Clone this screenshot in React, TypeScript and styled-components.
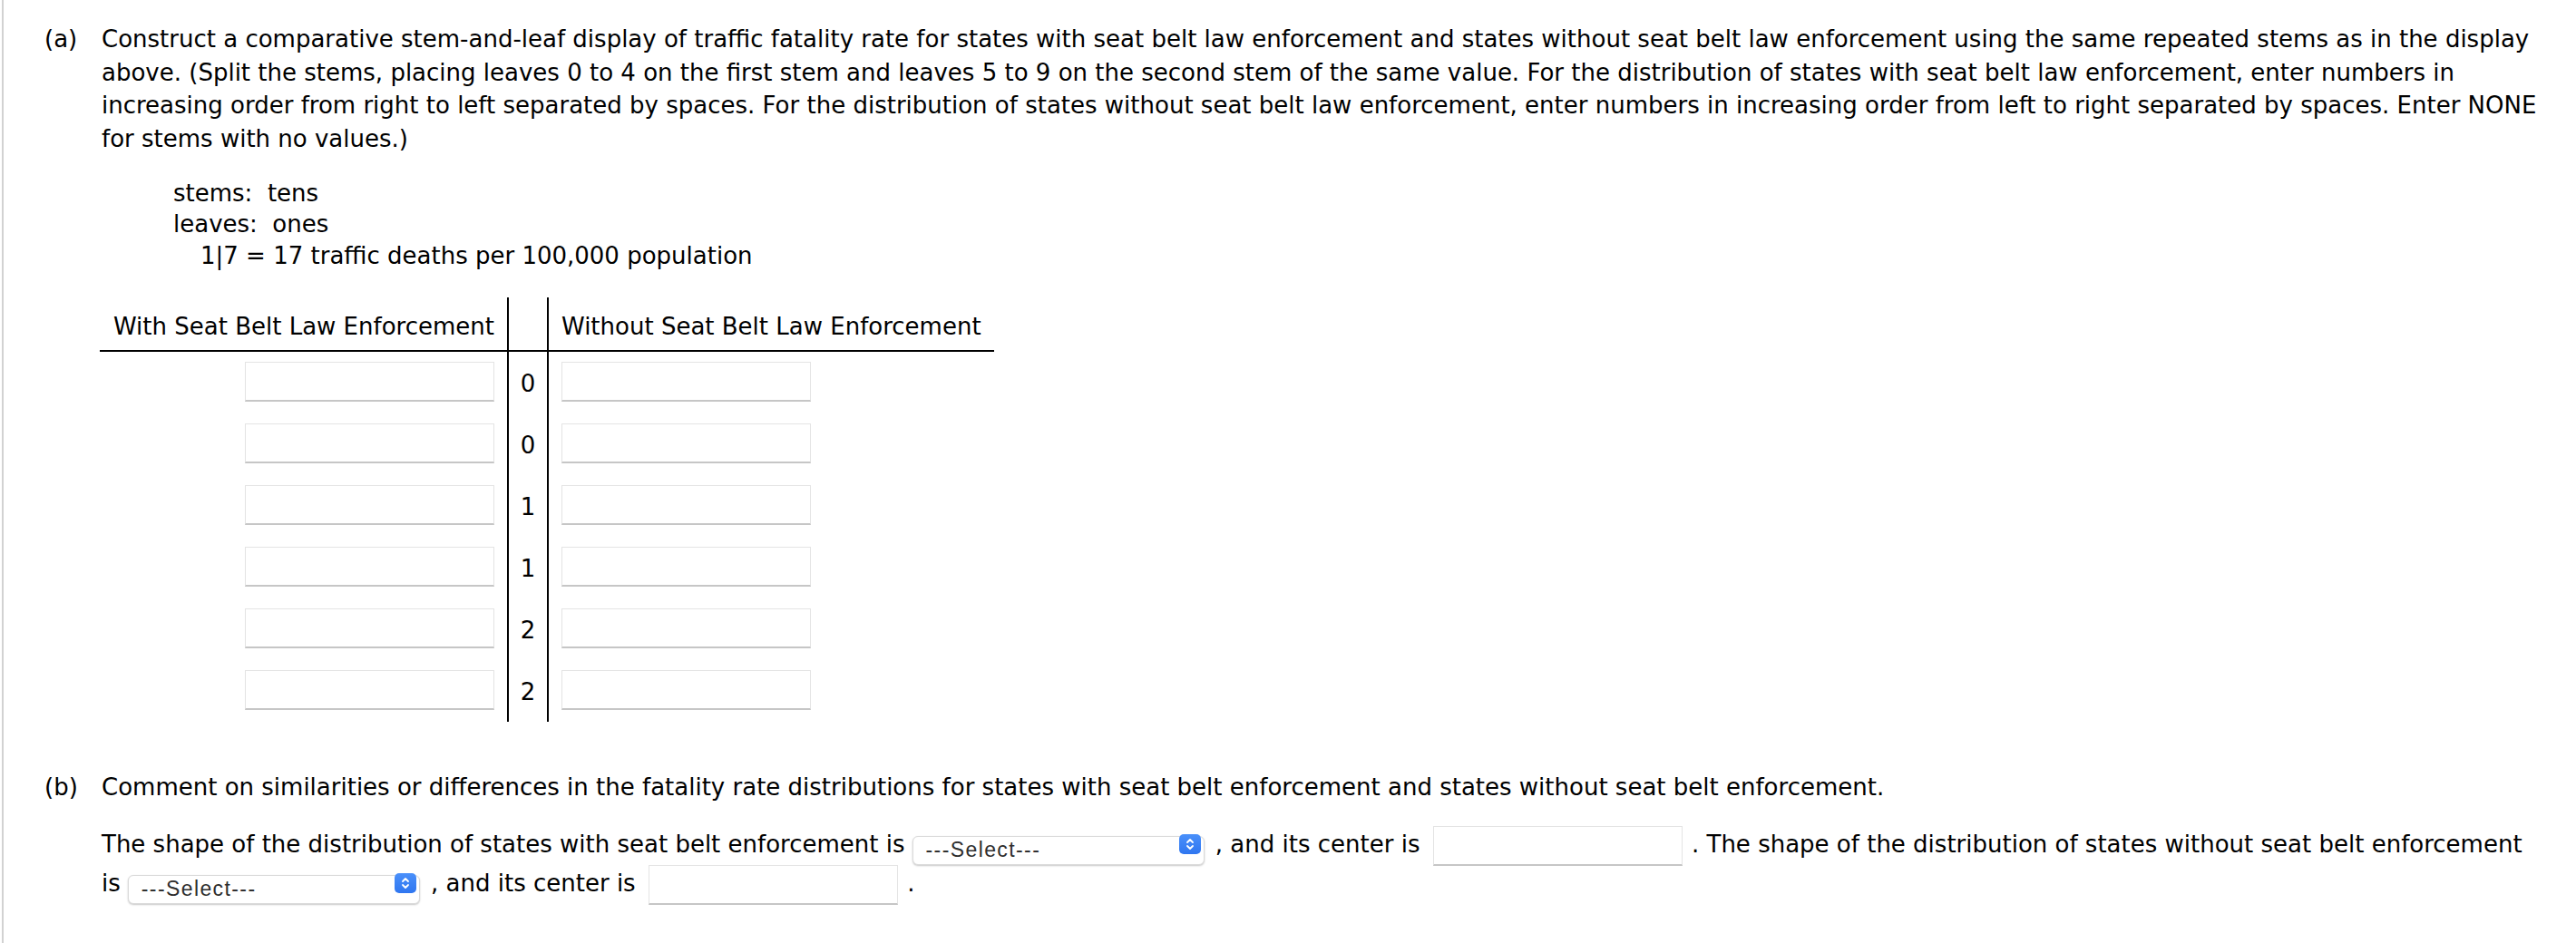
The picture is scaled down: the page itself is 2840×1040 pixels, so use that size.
import React from "react";
import styled, { createGlobalStyle } from "styled-components";

const GlobalStyle = createGlobalStyle`
  html, body {
    margin: 0;
    padding: 0;
    background: #ffffff;
  }
  body {
    font-family: "DejaVu Sans", Verdana, sans-serif;
    color: #000000;
  }
`;

const Page = styled.div`
  box-sizing: border-box;
  width: 2840px;
  height: 1040px;
  margin-left: 2px;
  border-left: 2px solid #d2d2d2;
  padding: 25px 38px 0 45px;
  font-size: 26px;
  line-height: 36.7px;
`;

const Part = styled.section<{ $top?: number }>`
  display: grid;
  grid-template-columns: 63px 1fr;
  margin-top: ${(p) => p.$top ?? 0}px;
`;

const Label = styled.div``;

const Body = styled.div`
  display: flex;
  flex-direction: column;
  align-items: flex-start;
`;

const Prompt = styled.p`
  margin: 0;
`;

const KeyBlock = styled.div`
  margin: 24px 0 0 79px;
  display: flex;
  flex-direction: column;
  line-height: 34.5px;
`;

const KeyLine = styled.div<{ $indent?: number }>`
  padding-left: ${(p) => p.$indent ?? 0}px;
`;

const StemTable = styled.div`
  display: flex;
  margin: 29px 0 0 -2px;
`;

const Column = styled.div<{ $width: number; $stem?: boolean }>`
  display: flex;
  flex-direction: column;
  width: ${(p) => p.$width}px;
  box-sizing: border-box;
  ${(p) =>
    p.$stem
      ? `border-left: 2px solid #000; border-right: 2px solid #000;`
      : ""}
`;

const HeadCell = styled.div<{ $align: "left" | "right" | "center" }>`
  box-sizing: border-box;
  height: 60px;
  border-bottom: 2px solid #000;
  display: flex;
  align-items: flex-end;
  justify-content: ${(p) =>
    p.$align === "left" ? "flex-start" : p.$align === "right" ? "flex-end" : "center"};
  padding: 0 14px 8px;
  white-space: nowrap;
`;

const BodyCell = styled.div<{ $align: "left" | "right" | "center" }>`
  height: 68px;
  box-sizing: border-box;
  display: flex;
  align-items: ${(p) => (p.$align === "center" ? "center" : "flex-start")};
  justify-content: ${(p) =>
    p.$align === "left" ? "flex-start" : p.$align === "right" ? "flex-end" : "center"};
  padding: ${(p) => (p.$align === "center" ? "2px 0 0" : "11px 14px 0")};
`;

const TextBox = styled.input`
  box-sizing: border-box;
  width: 275px;
  height: 44px;
  margin: 0;
  padding: 0 8px;
  border: 1px solid #e4e4e4;
  border-bottom: 2px solid #c6c6c6;
  border-radius: 0;
  background: #ffffff;
  font-family: "DejaVu Sans", Verdana, sans-serif;
  font-size: 22px;
  outline: none;
`;

const InlineBox = styled(TextBox)<{ $ml?: number; $mr?: number }>`
  vertical-align: middle;
  margin: -2px ${(p) => p.$mr ?? 0}px -2px ${(p) => p.$ml ?? 0}px;
`;

const AnswerText = styled.p`
  margin: 23px 0 0;
  line-height: 43px;
`;

const SelectWrap = styled.span<{ $ml?: number; $mr?: number }>`
  position: relative;
  display: inline-block;
  vertical-align: middle;
  width: 322px;
  height: 32px;
  margin: -4px ${(p) => p.$mr ?? 0}px 0 ${(p) => p.$ml ?? 0}px;
`;

const NativeSelect = styled.select`
  appearance: none;
  -webkit-appearance: none;
  box-sizing: border-box;
  width: 100%;
  height: 100%;
  margin: 0;
  padding: 0 40px 3px 14px;
  border: 1px solid #dadada;
  border-radius: 6px;
  background: #ffffff;
  box-shadow: 0 1px 2px rgba(0, 0, 0, 0.22);
  font-family: "Liberation Sans", Arial, sans-serif;
  font-size: 23px;
  letter-spacing: 1.4px;
  color: #2e2e2e;
  outline: none;
`;

const ArrowBadge = styled.span`
  position: absolute;
  right: 4px;
  top: 5px;
  width: 24px;
  height: 22px;
  border-radius: 5px;
  background: linear-gradient(#4a90fa, #2f76f0);
  display: flex;
  align-items: center;
  justify-content: center;
  pointer-events: none;
`;

const Chevrons = () => (
  <svg width="12" height="16" viewBox="0 0 12 16" fill="none">
    <path d="M3 6 L6 3 L9 6" stroke="#fff" strokeWidth="1.8" strokeLinecap="round" strokeLinejoin="round" />
    <path d="M3 10 L6 13 L9 10" stroke="#fff" strokeWidth="1.8" strokeLinecap="round" strokeLinejoin="round" />
  </svg>
);

const ShapeSelect = ({ ml, mr }: { ml?: number; mr?: number }) => (
  <SelectWrap $ml={ml} $mr={mr}>
    <NativeSelect defaultValue="" aria-label="shape">
      <option value="">---Select---</option>
    </NativeSelect>
    <ArrowBadge>
      <Chevrons />
    </ArrowBadge>
  </SelectWrap>
);

const stems = ["0", "0", "1", "1", "2", "2"];

export default function App() {
  return (
    <>
      <GlobalStyle />
      <Page>
        <Part>
          <Label>(a)</Label>
          <Body>
            <Prompt>
              Construct a comparative stem-and-leaf display of traffic fatality rate for states with seat belt law
              enforcement and states without seat belt law enforcement using the same repeated stems as in the
              display above. (Split the stems, placing leaves 0 to 4 on the first stem and leaves 5 to 9 on the
              second stem of the same value. For the distribution of states with seat belt law enforcement, enter
              numbers in increasing order from right to left separated by spaces. For the distribution of states
              without seat belt law enforcement, enter numbers in increasing order from left to right separated by
              spaces. Enter NONE for stems with no values.)
            </Prompt>
            <KeyBlock>
              <KeyLine>stems:&nbsp; tens</KeyLine>
              <KeyLine>leaves:&nbsp; ones</KeyLine>
              <KeyLine $indent={30}>1|7 = 17 traffic deaths per 100,000 population</KeyLine>
            </KeyBlock>
            <StemTable>
              <Column $width={449}>
                <HeadCell $align="right">With Seat Belt Law Enforcement</HeadCell>
                {stems.map((_, i) => (
                  <BodyCell key={i} $align="right">
                    <TextBox type="text" aria-label={`with enforcement leaves row ${i + 1}`} />
                  </BodyCell>
                ))}
              </Column>
              <Column $width={46} $stem>
                <HeadCell $align="center" />
                {stems.map((s, i) => (
                  <BodyCell key={i} $align="center">
                    {s}
                  </BodyCell>
                ))}
              </Column>
              <Column $width={491}>
                <HeadCell $align="left">Without Seat Belt Law Enforcement</HeadCell>
                {stems.map((_, i) => (
                  <BodyCell key={i} $align="left">
                    <TextBox type="text" aria-label={`without enforcement leaves row ${i + 1}`} />
                  </BodyCell>
                ))}
              </Column>
            </StemTable>
          </Body>
        </Part>
        <Part $top={54}>
          <Label>(b)</Label>
          <Body>
            <Prompt>
              Comment on similarities or differences in the fatality rate distributions for states with seat belt
              enforcement and states without seat belt enforcement.
            </Prompt>
            <AnswerText>
              The shape of the distribution of states with seat belt enforcement is
              <ShapeSelect ml={8} mr={4} /> , and its center is <InlineBox type="text" $ml={6} $mr={2} /> . The
              shape of the distribution of states without seat belt enforcement is
              <ShapeSelect ml={8} mr={4} /> , and its center is <InlineBox type="text" $ml={6} $mr={2} /> .
            </AnswerText>
          </Body>
        </Part>
      </Page>
    </>
  );
}
